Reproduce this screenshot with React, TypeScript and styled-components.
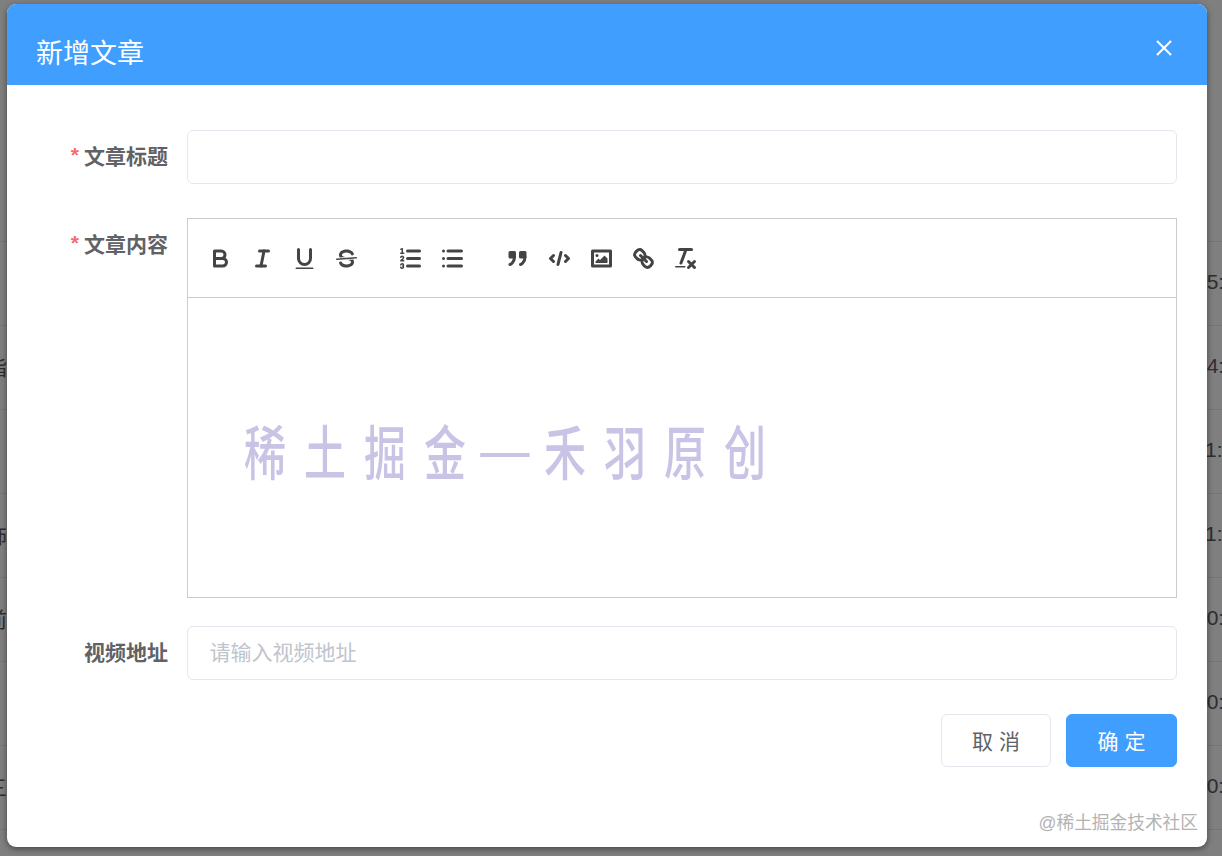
import React from 'react';
import styled, { createGlobalStyle } from 'styled-components';

const GlobalStyle = createGlobalStyle`
  html, body {
    margin: 0;
    height: 100%;
    overflow: hidden;
    background: #7f7f7f;
    font-family: "Liberation Sans", "Noto Sans CJK SC", sans-serif;
  }
  * { box-sizing: border-box; }
`;

const Page = styled.div`
  position: relative;
  width: 1222px;
  height: 856px;
  overflow: hidden;
  background: #7f7f7f;
  padding-top: 241px;
`;

const BgRow = styled.div`
  display: flex;
  justify-content: space-between;
  align-items: center;
  height: 84px;
  padding-bottom: 3px;
  border-top: 1px solid #747474;
  color: #2e2e2e;
  font-size: 21px;
  white-space: nowrap;
`;

const BgTitle = styled.span`
  margin-left: -14px;
`;

const BgTime = styled.span`
  width: 27px;
  overflow: hidden;
`;

const Dialog = styled.div`
  position: absolute;
  left: 7px;
  top: 4px;
  width: 1200px;
  height: 843px;
  background: #fff;
  border-radius: 9px;
  box-shadow: 0 2px 6px rgba(0, 0, 0, 0.45);
  overflow: hidden;
`;

const Header = styled.div`
  display: flex;
  align-items: center;
  justify-content: space-between;
  height: 81px;
  padding: 0 34px 0 29px;
  background: #409eff;
`;

const Title = styled.h2`
  margin: 14px 0 0;
  color: #fff;
  font-size: 27px;
  font-weight: 400;
`;

const CloseButton = styled.button`
  display: flex;
  margin: 6px 0 0;
  padding: 0;
  border: 0;
  background: none;
  color: #fff;
`;

const Form = styled.div`
  display: flex;
  flex-direction: column;
  padding: 45px 30px 0 0;
`;

const FormRow = styled.div<{ $gap?: number }>`
  display: grid;
  grid-template-columns: 180px 1fr;
  margin-bottom: ${p => p.$gap ?? 34}px;
`;

const Label = styled.label`
  display: flex;
  justify-content: flex-end;
  align-items: center;
  height: 50px;
  padding-right: 19px;
  color: #606266;
  font-size: 21px;
  font-weight: 700;
`;

const Star = styled.span`
  margin-right: 5px;
  color: #f56c6c;
  font-weight: 700;
`;

const Input = styled.input`
  display: block;
  width: 100%;
  height: 54px;
  padding: 0 21.5px;
  border: 1px solid #e4e7ed;
  border-radius: 6px;
  outline: none;
  font-size: 21px;
  font-family: inherit;
  &::placeholder {
    color: #c0c4cc;
  }
`;

const Editor = styled.div`
  height: 380px;
  border: 1px solid #ccc;
`;

const Toolbar = styled.div`
  display: flex;
  align-items: center;
  height: 79px;
  padding: 1px 11px 0;
  border-bottom: 1px solid #ccc;
`;

const ToolGroup = styled.div`
  display: flex;
  margin-right: 22.5px;
`;

const ToolButton = styled.button`
  display: flex;
  align-items: center;
  justify-content: center;
  width: 42px;
  height: 36px;
  padding: 0;
  border: 0;
  background: none;
`;

const Ico = styled.svg`
  width: 27px;
  height: 27px;
  fill: none;
  stroke: #444;
  stroke-width: 2;
  stroke-linecap: round;
  stroke-linejoin: round;

  .fill {
    fill: #444;
    stroke: none;
  }
  .both {
    fill: #444;
  }
  .thin {
    stroke-width: 1;
  }
`;

const EditorBody = styled.div`
  display: flex;
  align-items: center;
  height: 299px;
  padding: 3px 0 0 47px;
`;

const MarkChar = styled.span<{ $dash?: boolean }>`
  display: inline-block;
  width: 60px;
  text-align: center;
  color: #c9c3e6;
  font-family: "Noto Sans CJK SC", sans-serif;
  font-size: 42px;
  font-weight: ${p => (p.$dash ? 700 : 500)};
  line-height: 60px;
  transform: ${p => (p.$dash ? 'scaleX(1.45)' : 'scaleY(1.42)')};
`;

const Footer = styled.div`
  display: flex;
  justify-content: flex-end;
  gap: 15px;
`;

const Button = styled.button<{ $primary?: boolean }>`
  height: 53px;
  width: ${p => (p.$primary ? 111 : 110)}px;
  padding: 0 0 2px;
  border: 1px solid ${p => (p.$primary ? '#409eff' : '#e4e7ed')};
  border-radius: 6px;
  background: ${p => (p.$primary ? '#409eff' : '#fff')};
  color: ${p => (p.$primary ? '#fff' : '#606266')};
  font-size: 21px;
  font-family: inherit;
`;

const Credit = styled.div`
  position: absolute;
  right: 9px;
  bottom: 13px;
  color: #b3b3b3;
  font-size: 17.7px;
  white-space: nowrap;
`;

const bgRows = [
  ['', '15:'],
  ['指', '14:'],
  ['', '11:'],
  ['饰', '11:'],
  ['前', '10:'],
  ['', '10:'],
  ['三', '10:'],
  ['', ''],
];

const mark = ['稀', '土', '掘', '金', '—', '禾', '羽', '原', '创'];

const App: React.FC = () => {
  return (
    <Page>
      <GlobalStyle />
      {bgRows.map(([name, time], idx) => (
        <BgRow key={idx}>
          <BgTitle>{name}</BgTitle>
          <BgTime>{time}</BgTime>
        </BgRow>
      ))}

      <Dialog>
        <Header>
          <Title>新增文章</Title>
          <CloseButton aria-label="关闭">
            <svg width="18" height="18" viewBox="0 0 18 18" fill="none" stroke="currentColor" strokeWidth="2">
              <path d="M2 2l14 14M16 2L2 16" />
            </svg>
          </CloseButton>
        </Header>

        <Form>
          <FormRow>
            <Label><Star>*</Star>文章标题</Label>
            <Input />
          </FormRow>

          <FormRow $gap={28}>
            <Label><Star>*</Star>文章内容</Label>
            <Editor>
              <Toolbar>
                <ToolGroup>
                  <ToolButton>
                    <Ico viewBox="0 0 18 18">
                      <path d="M5,4H9.5A2.5,2.5,0,0,1,12,6.5v0A2.5,2.5,0,0,1,9.5,9H5A0,0,0,0,1,5,9V4A0,0,0,0,1,5,4Z" />
                      <path d="M5,9h5.5A2.5,2.5,0,0,1,13,11.5v0A2.5,2.5,0,0,1,10.5,14H5a0,0,0,0,1,0,0V9A0,0,0,0,1,5,9Z" />
                    </Ico>
                  </ToolButton>
                  <ToolButton>
                    <Ico viewBox="0 0 18 18">
                      <line x1="7" x2="13" y1="4" y2="4" />
                      <line x1="5" x2="11" y1="14" y2="14" />
                      <line x1="8" x2="10" y1="14" y2="4" />
                    </Ico>
                  </ToolButton>
                  <ToolButton>
                    <Ico viewBox="0 0 18 18">
                      <path d="M5,3V9a4.012,4.012,0,0,0,4,4H9a4.012,4.012,0,0,0,4-4V3" />
                      <rect className="fill" height="1" rx="0.5" ry="0.5" width="12" x="3" y="15" />
                    </Ico>
                  </ToolButton>
                  <ToolButton>
                    <Ico viewBox="0 0 18 18">
                      <line className="thin" x1="15.5" x2="2.5" y1="8.5" y2="9.5" />
                      <path className="fill" d="M9.007,8C6.542,7.791,6,7.519,6,6.5,6,5.792,7.283,5,9,5c1.571,0,2.765.679,2.969,1.309a1,1,0,0,0,1.9-.617C13.356,4.106,11.354,3,9,3,6.2,3,4,4.538,4,6.5a3.2,3.2,0,0,0,.5,1.843Z" />
                      <path className="fill" d="M8.984,10C11.457,10.208,12,10.479,12,11.5c0,.708-1.283,1.5-3,1.5-1.571,0-2.765-.679-2.969-1.309a1,1,0,1,0-1.9.617C4.644,13.894,6.646,15,9,15c2.8,0,5-1.538,5-3.5a3.2,3.2,0,0,0-.5-1.843Z" />
                    </Ico>
                  </ToolButton>
                </ToolGroup>

                <ToolGroup>
                  <ToolButton>
                    <Ico viewBox="0 0 18 18">
                      <line x1="7" x2="15" y1="4" y2="4" />
                      <line x1="7" x2="15" y1="9" y2="9" />
                      <line x1="7" x2="15" y1="14" y2="14" />
                      <line className="thin" x1="2.5" x2="4.5" y1="5.5" y2="5.5" />
                      <path className="fill" d="M3.5,6A0.5,0.5,0,0,1,3,5.5V3.085l-0.276.138A0.5,0.5,0,0,1,2.053,3c-0.124-.247-0.023-0.324.224-0.447l1-.5A0.5,0.5,0,0,1,4,2.5v3A0.5,0.5,0,0,1,3.5,6Z" />
                      <path className="thin" d="M4.5,10.5h-2c0-.234,1.85-1.076,1.85-2.234A0.959,0.959,0,0,0,2.5,8.156" />
                      <path className="thin" d="M2.5,14.846a0.959,0.959,0,0,0,1.85-.109A0.7,0.7,0,0,0,3.75,14a0.688,0.688,0,0,0,.6-0.736,0.959,0.959,0,0,0-1.85-.109" />
                    </Ico>
                  </ToolButton>
                  <ToolButton>
                    <Ico viewBox="0 0 18 18">
                      <line x1="6" x2="15" y1="4" y2="4" />
                      <line x1="6" x2="15" y1="9" y2="9" />
                      <line x1="6" x2="15" y1="14" y2="14" />
                      <line x1="3" x2="3" y1="4" y2="4" />
                      <line x1="3" x2="3" y1="9" y2="9" />
                      <line x1="3" x2="3" y1="14" y2="14" />
                    </Ico>
                  </ToolButton>
                </ToolGroup>

                <ToolGroup>
                  <ToolButton>
                    <Ico viewBox="0 0 18 18">
                      <rect className="both" height="3" width="3" x="4" y="5" />
                      <rect className="both" height="3" width="3" x="11" y="5" />
                      <path className="both" d="M7,8c0,4.031-3,5-3,5" />
                      <path className="both" d="M14,8c0,4.031-3,5-3,5" />
                    </Ico>
                  </ToolButton>
                  <ToolButton>
                    <Ico viewBox="0 0 18 18">
                      <polyline points="5 7 3 9 5 11" />
                      <polyline points="13 7 15 9 13 11" />
                      <line x1="10" x2="8" y1="5" y2="13" />
                    </Ico>
                  </ToolButton>
                  <ToolButton>
                    <Ico viewBox="0 0 18 18">
                      <rect height="10" width="12" x="3" y="4" />
                      <circle className="fill" cx="6" cy="7" r="1" />
                      <polyline className="fill" points="5 12 5 11 7 9 8 10 11 7 13 9 13 12 5 12" />
                    </Ico>
                  </ToolButton>
                  <ToolButton>
                    <Ico viewBox="0 0 18 18">
                      <line x1="7" x2="11" y1="7" y2="11" />
                      <path d="M8.9,4.577a3.476,3.476,0,0,1,.36,4.679A3.476,3.476,0,0,1,4.577,8.9C3.185,7.5,2.035,6.4,4.217,4.217S7.5,3.185,8.9,4.577Z" />
                      <path d="M13.423,9.1a3.476,3.476,0,0,0-4.679-.36,3.476,3.476,0,0,0,.36,4.679c1.392,1.392,2.5,2.542,4.679.36S14.815,10.5,13.423,9.1Z" />
                    </Ico>
                  </ToolButton>
                  <ToolButton>
                    <Ico viewBox="0 0 18 18">
                      <line x1="5" x2="13" y1="3" y2="3" />
                      <line x1="6" x2="9.35" y1="12" y2="3" />
                      <line x1="11" x2="15" y1="11" y2="15" />
                      <line x1="15" x2="11" y1="11" y2="15" />
                      <rect className="fill" height="1" rx="0.5" ry="0.5" width="7" x="2" y="14" />
                    </Ico>
                  </ToolButton>
                </ToolGroup>
              </Toolbar>
              <EditorBody>
                {mark.map((ch, idx) => (
                  <MarkChar key={idx} $dash={ch === '—'}>{ch}</MarkChar>
                ))}
              </EditorBody>
            </Editor>
          </FormRow>

          <FormRow>
            <Label>视频地址</Label>
            <Input placeholder="请输入视频地址" />
          </FormRow>

          <Footer>
            <Button>取 消</Button>
            <Button $primary>确 定</Button>
          </Footer>
        </Form>

        <Credit>@稀土掘金技术社区</Credit>
      </Dialog>
    </Page>
  );
};

export default App;
